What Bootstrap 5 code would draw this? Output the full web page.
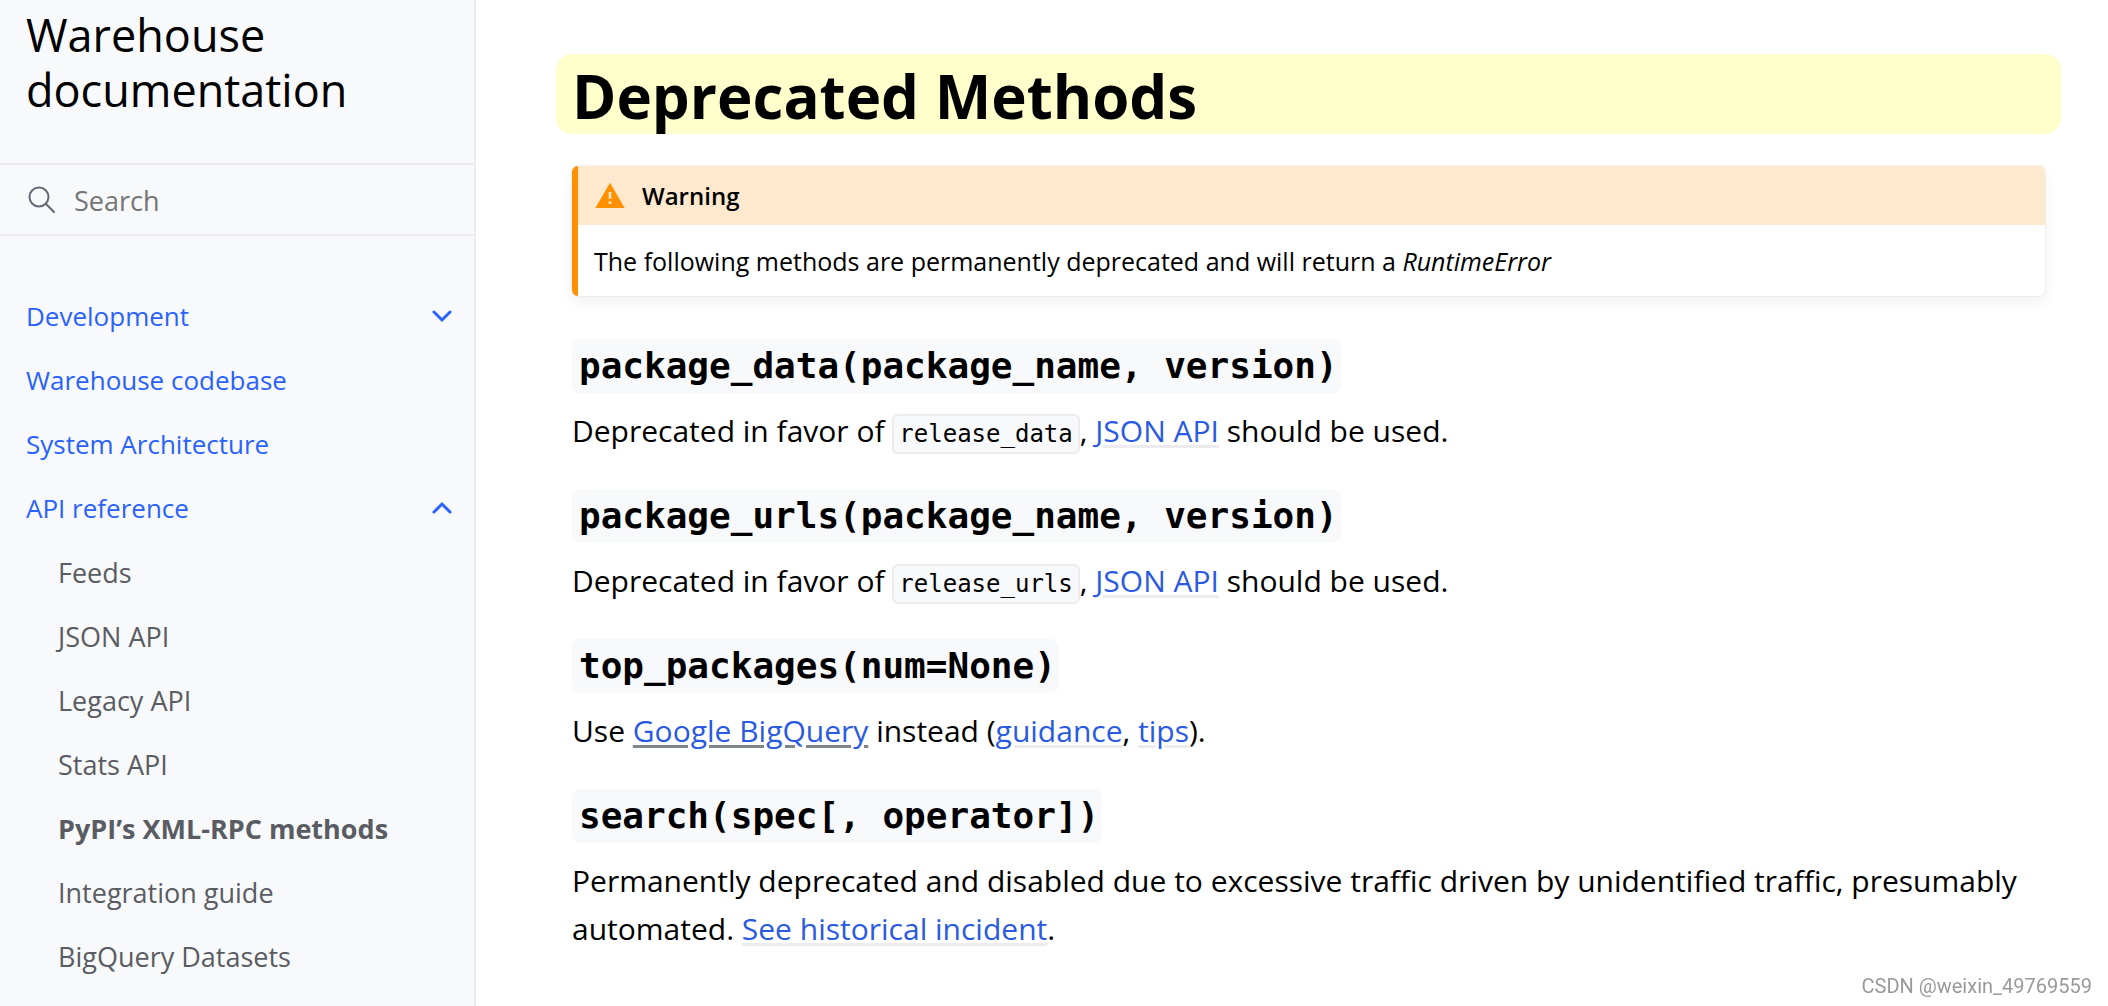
<!DOCTYPE html>
<html lang="en">
<head>
<meta charset="utf-8">
<meta name="viewport" content="width=device-width, initial-scale=1">
<title>Warehouse documentation</title>
<link href="https://cdn.jsdelivr.net/npm/bootstrap@5.3.0/dist/css/bootstrap.min.css" rel="stylesheet">
<style>
  body { font-family: "Open Sans", "Noto Sans", sans-serif; font-size: 30px; line-height: 48px; color: #000; background: #fff; }
  .docs-sidebar { width: 476px; background: #f8f9fb; border-right: 2px solid #eeebee; }
  .docs-brand { font-size: 45px; line-height: 55px; padding: 7px 26px 46px; color: #000; }
  .docs-search { height: 73px; padding: 0 27px; border-top: 2px solid #eeebee; border-bottom: 2px solid #eeebee; }
  .docs-search input { font-size: 27px; line-height: 36px; padding: 3px 0 0 1px; color: #000; }
  .docs-search input::placeholder { color: #757575; opacity: 1; }
  .docs-tree { padding-top: 48px; font-size: 26px; line-height: 36px; }
  .docs-tree a { padding: 14px 0 14px 26px; color: #2962ff; text-decoration: none; }
  .docs-tree ul { padding-top: 1px; font-size: 27px; }
  .docs-tree ul a { padding-left: 58px; color: #5a5c63; }
  .docs-tree button { width: 64px; padding: 0 0 4px; color: #2962ff; }
  .docs-main { padding: 54px 63px 0 96px; }
  .section-title { margin: 0 -16px 32px; padding: 4px 16px 0; border-radius: 16px; background: #ffc; font-size: 60px; line-height: 76px; font-weight: 700; }
  .admonition { border-left: 6px solid #ff9100; border-radius: 6px; overflow: hidden; box-shadow: 0 6px 16px rgba(0,0,0,.06), 0 0 2px rgba(0,0,0,.14); margin-bottom: 43px; font-size: 25px; line-height: 36px; }
  .admonition-title { padding: 12px 16px 11px; background: #ffe9ce; font-size: 24px; font-weight: 600; }
  .admonition-text { padding: 18px 16px 17px; }
  .method-title { margin: 0 0 14px; }
  .method-title code { padding: 0 3px 0 7px; border-radius: 8px; background: #f8f9fb; color: #000; font-family: "DejaVu Sans Mono", monospace; font-size: 36px; line-height: 54px; font-weight: 700; }
  .method-text { margin: 0 0 34px; }
  .method-text code { border: 2px solid #eeebee; border-radius: 6px; background: #f8f9fb; color: #000; font-family: "DejaVu Sans Mono", monospace; font-size: 24px; line-height: 36px; padding: 4px 5px; }
  .method-text a { color: #2a5adf; text-decoration: underline; text-decoration-color: #eeebee; text-decoration-thickness: 3px; text-underline-offset: 3px; }
  .method-text a.external-ref { text-decoration-color: #81868d; }
  .watermark { right: 16px; bottom: 8px; font-family: Roboto, sans-serif; font-size: 20px; line-height: 24px; color: #999; }
</style>
<script src="https://cdn.jsdelivr.net/npm/bootstrap@5.3.0/dist/js/bootstrap.bundle.min.js"></script>
</head>
<body>
<div class="d-flex min-vh-100">
  <aside class="docs-sidebar flex-shrink-0">
    <div class="docs-brand">Warehouse documentation</div>
    <form class="docs-search d-flex align-items-center" role="search">
      <label for="q" class="d-flex me-3"><svg width="30" height="30" viewBox="0 0 30 30" fill="none" stroke="#646776" stroke-width="2" stroke-linecap="round" aria-label="Search"><circle cx="12" cy="12" r="9.5"/><path d="M18.8 18.8 27 27"/></svg></label>
      <input id="q" type="search" class="flex-fill border-0 bg-transparent" placeholder="Search">
    </form>
    <nav class="docs-tree">
      <div class="d-flex"><a class="flex-fill" href="#">Development</a><button class="btn border-0" type="button" aria-label="Expand"><svg width="20" height="14" viewBox="0 0 20 14" fill="none" stroke="currentColor" stroke-width="3" stroke-linecap="round"><path d="m2 3 8 8 8-8"/></svg></button></div>
      <a class="d-block" href="#">Warehouse codebase</a>
      <a class="d-block" href="#">System Architecture</a>
      <div class="d-flex"><a class="flex-fill" href="#">API reference</a><button class="btn border-0" type="button" aria-label="Collapse"><svg width="20" height="14" viewBox="0 0 20 14" fill="none" stroke="currentColor" stroke-width="3" stroke-linecap="round"><path d="m2 11 8-8 8 8"/></svg></button></div>
      <ul class="list-unstyled m-0">
        <li><a class="d-block" href="#">Feeds</a></li>
        <li><a class="d-block" href="#">JSON API</a></li>
        <li><a class="d-block" href="#">Legacy API</a></li>
        <li><a class="d-block" href="#">Stats API</a></li>
        <li><a class="d-block fw-bold" href="#">PyPI’s XML-RPC methods</a></li>
        <li><a class="d-block" href="#">Integration guide</a></li>
        <li><a class="d-block" href="#">BigQuery Datasets</a></li>
      </ul>
    </nav>
  </aside>
  <main class="docs-main flex-fill">
    <h2 class="section-title">Deprecated Methods</h2>
    <div class="admonition">
      <div class="admonition-title d-flex align-items-center"><svg class="me-3" width="32" height="32" viewBox="0 0 24 24" fill="#ff9100" aria-hidden="true"><path d="M13 14h-2V9h2m0 9h-2v-2h2M1 21h22L12 2 1 21z"/></svg>Warning</div>
      <div class="admonition-text">The following methods are permanently deprecated and will return a <em>RuntimeError</em></div>
    </div>
    <section>
      <h3 class="method-title d-flex"><code>package_data(package_name, version)</code></h3>
      <p class="method-text">Deprecated in favor of <code>release_data</code>, <a href="#">JSON API</a> should be used.</p>
    </section>
    <section>
      <h3 class="method-title d-flex"><code>package_urls(package_name, version)</code></h3>
      <p class="method-text">Deprecated in favor of <code>release_urls</code>, <a href="#">JSON API</a> should be used.</p>
    </section>
    <section>
      <h3 class="method-title d-flex"><code>top_packages(num=None)</code></h3>
      <p class="method-text">Use <a class="external-ref" href="#">Google BigQuery</a> instead (<a href="#">guidance</a>, <a href="#">tips</a>).</p>
    </section>
    <section>
      <h3 class="method-title d-flex"><code>search(spec[, operator])</code></h3>
      <p class="method-text">Permanently deprecated and disabled due to excessive traffic driven by unidentified traffic, presumably automated. <a href="#">See historical incident</a>.</p>
    </section>
  </main>
</div>
<div class="watermark position-fixed">CSDN @weixin_49769559</div>
</body>
</html>
